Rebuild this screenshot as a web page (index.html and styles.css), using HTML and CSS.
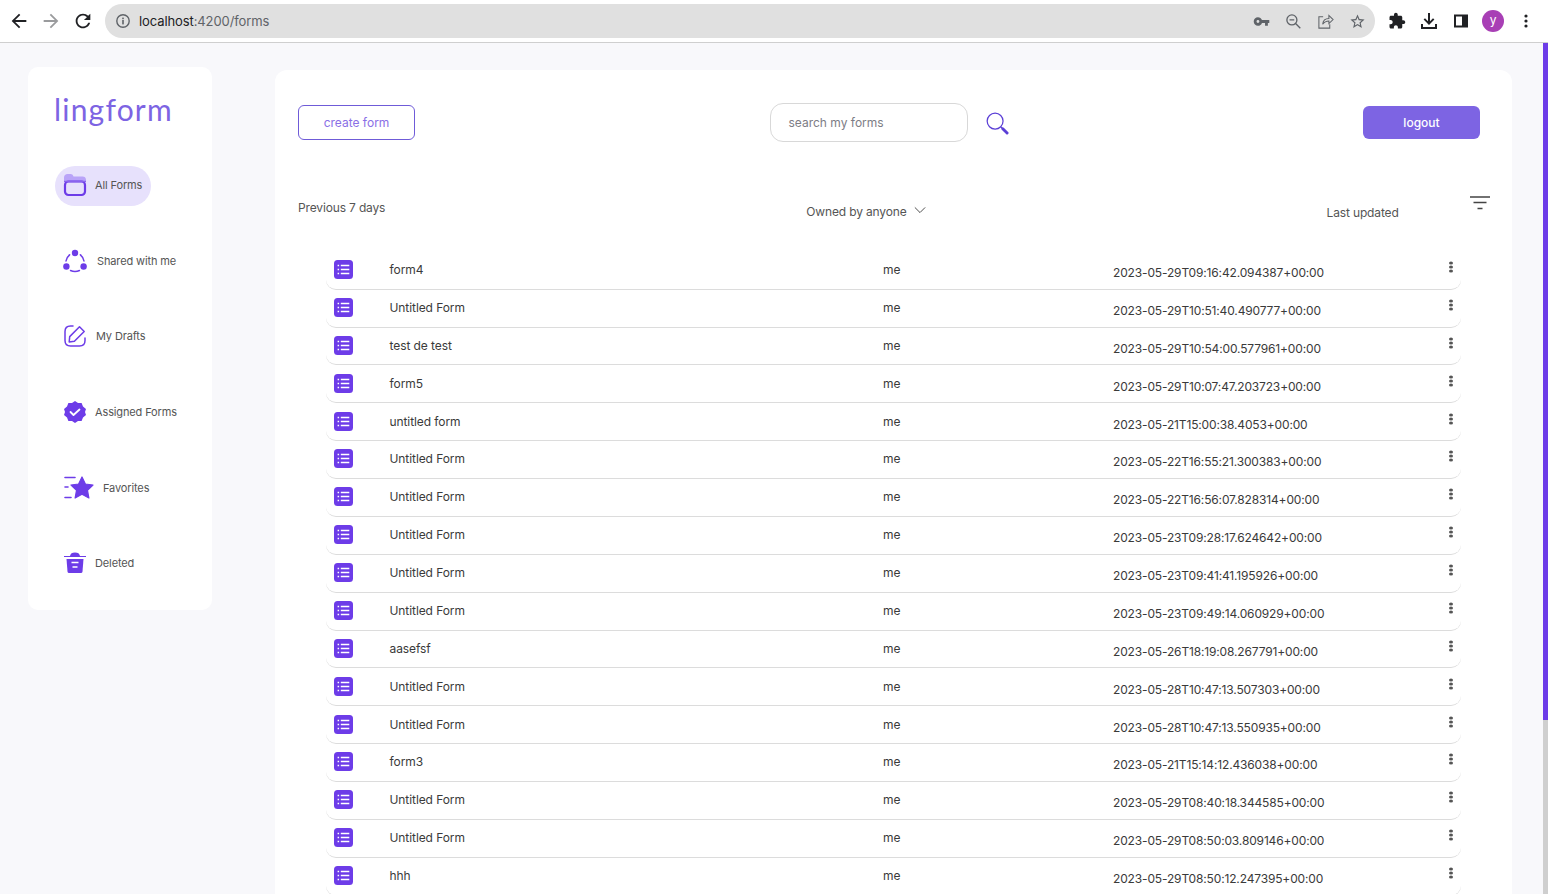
FILE: index.html
```html
<!DOCTYPE html>
<html lang="en">
<head>
<meta charset="utf-8">
<title>lingform</title>
<link rel="stylesheet" href="styles.css">
</head>
<body>
<header class="toolbar">
  <svg class="tb-icon back" viewBox="0 0 24 24"><path d="M20 11H7.83l5.59-5.59L12 4l-8 8 8 8 1.41-1.41L7.83 13H20v-2z"/></svg>
  <svg class="tb-icon forward" viewBox="0 0 24 24"><path d="M4 11h12.17l-5.59-5.59L12 4l8 8-8 8-1.41-1.41L16.17 13H4v-2z"/></svg>
  <svg class="tb-icon reload" viewBox="0 0 24 24"><path d="M17.65 6.35C16.2 4.9 14.21 4 12 4c-4.42 0-7.99 3.58-7.99 8s3.57 8 7.99 8c3.73 0 6.84-2.55 7.73-6h-2.08c-.82 2.33-3.04 4-5.65 4-3.31 0-6-2.69-6-6s2.69-6 6-6c1.66 0 3.14.69 4.22 1.78L13 11h7V4l-2.35 2.35z"/></svg>
  <div class="omnibox">
    <svg class="info" viewBox="0 0 16 16"><circle cx="8" cy="8" r="6.2" fill="none" stroke="#5f6368" stroke-width="1.4"/><rect x="7.2" y="7" width="1.6" height="4.4" fill="#5f6368"/><rect x="7.2" y="4.6" width="1.6" height="1.6" fill="#5f6368"/></svg>
    <span class="url"><span class="host">localhost</span>:4200/forms</span>
    <div class="omni-actions">
      <svg class="omni-icon" viewBox="0 0 24 24"><path d="M12.65 10C11.83 7.67 9.61 6 7 6c-3.31 0-6 2.69-6 6s2.69 6 6 6c2.61 0 4.83-1.67 5.65-4H17v4h4v-4h2v-4H12.65zM7 14c-1.1 0-2-.9-2-2s.9-2 2-2 2 .9 2 2-.9 2-2 2z"/></svg>
      <svg class="omni-icon" viewBox="0 0 18 18"><circle cx="7.3" cy="7.3" r="5.3" fill="none" stroke="#5f6368" stroke-width="1.4"/><path d="M11.2 11.2l5 5M4.8 7.3h5" fill="none" stroke="#5f6368" stroke-width="1.4"/></svg>
      <svg class="omni-icon" viewBox="0 0 18 18"><path d="M6.5 4H2v12h11.5v-4M6 12c.4-4 3-6.2 6.6-6.2V2.600L17 7l-4.400 4.200V8.400C9.800 8.400 7.600 9.600 6 12z" fill="none" stroke="#5f6368" stroke-width="1.1"/></svg>
      <svg class="omni-icon" viewBox="0 0 24 24"><path d="M22 9.24l-7.19-.62L12 2 9.19 8.63 2 9.24l5.46 4.73L5.82 21 12 17.27 18.18 21l-1.63-7.03L22 9.24zM12 15.4l-3.76 2.27 1-4.28-3.32-2.88 4.38-.38L12 6.1l1.71 4.04 4.38.38-3.32 2.88 1 4.28L12 15.4z"/></svg>
    </div>
  </div>
  <svg class="tb-icon ext" viewBox="0 0 24 24"><path d="M20.5 11H19V7c0-1.1-.9-2-2-2h-4V3.5C13 2.12 11.88 1 10.5 1S8 2.12 8 3.5V5H4c-1.1 0-1.99.9-1.99 2v3.8H3.5c1.49 0 2.7 1.21 2.7 2.7s-1.21 2.7-2.7 2.7H2V20c0 1.1.9 2 2 2h3.8v-1.5c0-1.49 1.21-2.7 2.7-2.7 1.49 0 2.7 1.21 2.7 2.7V22H17c1.1 0 2-.9 2-2v-4h1.5c1.38 0 2.5-1.12 2.5-2.5S21.88 11 20.5 11z"/></svg>
  <svg class="tb-icon download" viewBox="0 0 18 18"><path d="M8 1h2v8.2l3-3 1.4 1.4L9 13 3.6 7.6 5 6.2l3 3zM1 12h2v3h12v-3h2v5H1z"/></svg>
  <svg class="tb-icon panel" viewBox="0 0 16 16"><path fill-rule="evenodd" d="M1 1.5h14v13H1zM3 3.500v9h6v-9z"/></svg>
  <span class="avatar">y</span>
  <svg class="tb-icon kebab" viewBox="0 0 16 16"><circle cx="8" cy="3" r="1.6"/><circle cx="8" cy="8" r="1.6"/><circle cx="8" cy="13" r="1.6"/></svg>
</header>

<div class="viewport">
  <div class="page">
    <aside class="sidebar">
      <div class="logo">lingform</div>
      <nav class="nav">
        <a class="nav-item active">
          <svg class="nav-icon" viewBox="0 0 24 24"><path d="M1 9V4.500C1 2.500 2.500 1 4.500 1H7.500c1.500 0 2.200.7 3 2.500h9c2 0 3.500 1 3.500 3.500v2z" fill="#b9a3f8"/><rect x="2" y="8.500" width="20" height="13.500" rx="3.500" fill="#e7e1fc" stroke="#6d3ce8" stroke-width="2.200"/><path d="M1 8.500h22" stroke="#8a63ee" stroke-width="1.400"/></svg>
          <span>All Forms</span>
        </a>
        <a class="nav-item shared">
          <svg class="nav-icon" viewBox="0 0 24 24"><circle cx="12" cy="4" r="3.200" fill="#6d3ce8"/><circle cx="3.400" cy="17.500" r="3.200" fill="#6d3ce8"/><circle cx="20.600" cy="17.500" r="3.200" fill="#6d3ce8"/><path d="M6.600 5.800A10 10 0 0 0 3 12M17.400 5.800A10 10 0 0 1 21 12M7.500 21.500a11 11 0 0 0 9 0" fill="none" stroke="#6d3ce8" stroke-width="1.500" stroke-linecap="round"/></svg>
          <span>Shared with me</span>
        </a>
        <a class="nav-item drafts">
          <svg class="nav-icon" viewBox="0 0 24 24"><path d="M10 2H7.500C3.800 2 2 4 2 7.500v9C2 20 3.800 22 7.500 22h9c3.700 0 5.500-2 5.500-5.500V14" fill="none" stroke="#6d3ce8" stroke-width="1.500" stroke-linecap="round"/><path d="M16.500 2.800l4.700 4.700-9.800 9.800-5.200.6.500-5.300z" fill="none" stroke="#6d3ce8" stroke-width="1.500" stroke-linejoin="round"/></svg>
          <span>My Drafts</span>
        </a>
        <a class="nav-item assigned">
          <svg class="nav-icon" viewBox="0 0 24 24"><path d="M12 1l3 2h3.600L20 6.500l3 2.500-1 3 1 3-3 2.500L18.600 21H15l-3 2-3-2H5.400L4 17.500 1 15l1-3-1-3 3-2.500L5.400 3H9z" fill="#6d3ce8"/><path d="M7.500 12l3 3 6-5.500" fill="none" stroke="#fff" stroke-width="1.800" stroke-linecap="round" stroke-linejoin="round"/></svg>
          <span>Assigned Forms</span>
        </a>
        <a class="nav-item favorites">
          <svg class="fav-icon" viewBox="0 0 30 24"><path d="M18 1l3.400 7 7.600 1-5.500 5.300 1.400 7.700-6.900-3.700L11.100 22l1.400-7.700L7 9l7.600-1z" fill="#6d3ce8" stroke="#6d3ce8" stroke-linejoin="round" stroke-width="1.200"/><path d="M1 1.500h10M1 11h3M1 21.500h6" stroke="#6d3ce8" stroke-width="1.600" stroke-linecap="round"/></svg>
          <span>Favorites</span>
        </a>
        <a class="nav-item deleted">
          <svg class="nav-icon" viewBox="0 0 24 24"><path d="M7 5c.5-2.500 2-3.500 5-3.500s4.500 1 5 3.500h6v1H1V5z" fill="#6d3ce8"/><path d="M3.500 8h17l-1 12.500c-.1 1-1 1.500-2 1.500h-11c-1 0-1.900-.5-2-1.500z" fill="#6d3ce8"/><path d="M8.500 11.500h7M9.500 16h5" stroke="#fff" stroke-width="1.400"/></svg>
          <span>Deleted</span>
        </a>
      </nav>
    </aside>

    <main class="main">
      <div class="topbar">
        <button class="create-btn">create form</button>
        <div class="search">
          <div class="search-box">search my forms</div>
          <svg class="search-icon" viewBox="0 0 24 24"><circle cx="9.500" cy="9.500" r="8.300" fill="none" stroke="#5b3fd6" stroke-width="1.300"/><path d="M15.500 15.500l2 2" stroke="#5b3fd6" stroke-width="1.300"/><path d="M17.500 17.500l4.500 4.500" stroke="#5b3fd6" stroke-width="3" stroke-linecap="round"/></svg>
        </div>
        <button class="logout-btn">logout</button>
      </div>

      <div class="list-head">
        <span class="period">Previous 7 days</span>
        <span class="owner">Owned by anyone
          <svg class="chevron" viewBox="0 0 14 8"><path d="M1 1l6 6 6-6" fill="none" stroke="#444" stroke-width="1.100"/></svg>
        </span>
        <span class="updated">Last updated</span>
        <svg class="filter" viewBox="0 0 20 14"><path d="M0 1h20M3.500 6.500h13M7.500 12.500h5" stroke="#444" stroke-width="1.500"/></svg>
      </div>

      <div class="rows">
        <div class="row"><svg class="doc" viewBox="0 0 19 19"><use href="#doc-icon"/></svg><span class="name">form4</span><span class="who">me</span><span class="date">2023-05-29T09:16:42.094387+00:00</span><span class="dots"><i></i><i></i><i></i></span></div>
        <div class="row"><svg class="doc" viewBox="0 0 19 19"><use href="#doc-icon"/></svg><span class="name">Untitled Form</span><span class="who">me</span><span class="date">2023-05-29T10:51:40.490777+00:00</span><span class="dots"><i></i><i></i><i></i></span></div>
        <div class="row"><svg class="doc" viewBox="0 0 19 19"><use href="#doc-icon"/></svg><span class="name">test de test</span><span class="who">me</span><span class="date">2023-05-29T10:54:00.577961+00:00</span><span class="dots"><i></i><i></i><i></i></span></div>
        <div class="row"><svg class="doc" viewBox="0 0 19 19"><use href="#doc-icon"/></svg><span class="name">form5</span><span class="who">me</span><span class="date">2023-05-29T10:07:47.203723+00:00</span><span class="dots"><i></i><i></i><i></i></span></div>
        <div class="row"><svg class="doc" viewBox="0 0 19 19"><use href="#doc-icon"/></svg><span class="name">untitled form</span><span class="who">me</span><span class="date">2023-05-21T15:00:38.4053+00:00</span><span class="dots"><i></i><i></i><i></i></span></div>
        <div class="row"><svg class="doc" viewBox="0 0 19 19"><use href="#doc-icon"/></svg><span class="name">Untitled Form</span><span class="who">me</span><span class="date">2023-05-22T16:55:21.300383+00:00</span><span class="dots"><i></i><i></i><i></i></span></div>
        <div class="row"><svg class="doc" viewBox="0 0 19 19"><use href="#doc-icon"/></svg><span class="name">Untitled Form</span><span class="who">me</span><span class="date">2023-05-22T16:56:07.828314+00:00</span><span class="dots"><i></i><i></i><i></i></span></div>
        <div class="row"><svg class="doc" viewBox="0 0 19 19"><use href="#doc-icon"/></svg><span class="name">Untitled Form</span><span class="who">me</span><span class="date">2023-05-23T09:28:17.624642+00:00</span><span class="dots"><i></i><i></i><i></i></span></div>
        <div class="row"><svg class="doc" viewBox="0 0 19 19"><use href="#doc-icon"/></svg><span class="name">Untitled Form</span><span class="who">me</span><span class="date">2023-05-23T09:41:41.195926+00:00</span><span class="dots"><i></i><i></i><i></i></span></div>
        <div class="row"><svg class="doc" viewBox="0 0 19 19"><use href="#doc-icon"/></svg><span class="name">Untitled Form</span><span class="who">me</span><span class="date">2023-05-23T09:49:14.060929+00:00</span><span class="dots"><i></i><i></i><i></i></span></div>
        <div class="row"><svg class="doc" viewBox="0 0 19 19"><use href="#doc-icon"/></svg><span class="name">aasefsf</span><span class="who">me</span><span class="date">2023-05-26T18:19:08.267791+00:00</span><span class="dots"><i></i><i></i><i></i></span></div>
        <div class="row"><svg class="doc" viewBox="0 0 19 19"><use href="#doc-icon"/></svg><span class="name">Untitled Form</span><span class="who">me</span><span class="date">2023-05-28T10:47:13.507303+00:00</span><span class="dots"><i></i><i></i><i></i></span></div>
        <div class="row"><svg class="doc" viewBox="0 0 19 19"><use href="#doc-icon"/></svg><span class="name">Untitled Form</span><span class="who">me</span><span class="date">2023-05-28T10:47:13.550935+00:00</span><span class="dots"><i></i><i></i><i></i></span></div>
        <div class="row"><svg class="doc" viewBox="0 0 19 19"><use href="#doc-icon"/></svg><span class="name">form3</span><span class="who">me</span><span class="date">2023-05-21T15:14:12.436038+00:00</span><span class="dots"><i></i><i></i><i></i></span></div>
        <div class="row"><svg class="doc" viewBox="0 0 19 19"><use href="#doc-icon"/></svg><span class="name">Untitled Form</span><span class="who">me</span><span class="date">2023-05-29T08:40:18.344585+00:00</span><span class="dots"><i></i><i></i><i></i></span></div>
        <div class="row"><svg class="doc" viewBox="0 0 19 19"><use href="#doc-icon"/></svg><span class="name">Untitled Form</span><span class="who">me</span><span class="date">2023-05-29T08:50:03.809146+00:00</span><span class="dots"><i></i><i></i><i></i></span></div>
        <div class="row"><svg class="doc" viewBox="0 0 19 19"><use href="#doc-icon"/></svg><span class="name">hhh</span><span class="who">me</span><span class="date">2023-05-29T08:50:12.247395+00:00</span><span class="dots"><i></i><i></i><i></i></span></div>
      </div>
    </main>
  </div>
  <div class="scrollbar"><div class="thumb"></div></div>
</div>

<svg class="defs" width="0" height="0">
  <symbol id="doc-icon" viewBox="0 0 19 19">
    <rect width="19" height="19" rx="3.500" fill="#6d3ce8"/>
    <path d="M6.800 5.500h8.500M6.800 9.500h8.500M6.800 13.500h8.500" stroke="#fff" stroke-width="1.400"/>
    <path d="M3.600 5.500h1.500M3.600 9.500h1.500M3.600 13.500h1.500" stroke="#fff" stroke-width="1.400"/>
  </symbol>
</svg>
</body>
</html>
```
FILE: styles.css
```css
* { box-sizing: border-box; }
html, body { margin: 0; height: 100%; overflow: hidden; }
body { font-family: Inter, "Liberation Sans", sans-serif; background: #f8f8fb; color: #333; font-size: 12px; display: flex; flex-direction: column; }

/* browser toolbar */
.toolbar { height: 43px; flex: none; background: #fff; border-bottom: 1px solid #cfcfcf; display: flex; align-items: center; padding: 0 0 0 8px; position: relative; }
.tb-icon { width: 22px; height: 22px; flex: none; fill: #202124; }
.back { margin-right: 10px; }
.forward { fill: #9a9b9d; margin-right: 10px; }
.reload { margin-right: 11px; }
.omnibox { width: 1270px; height: 34px; background: #e0e0e0; border-radius: 17px; display: flex; align-items: center; padding: 0 9.5px 0 10px; flex: none; }
.info { width: 16px; height: 16px; flex: none; margin-right: 8px; }
.url { font-size: 13px; letter-spacing: -0.1px; color: #5f6368; }
.host { color: #202124; }
.omni-actions { margin-left: auto; display: flex; align-items: center; gap: 15px; }
.omni-icon { width: 17px; height: 17px; fill: #5f6368; }
.ext { width: 18px; height: 18px; margin-left: 13px; }
.download { width: 18px; height: 18px; margin-left: 14px; }
.panel { width: 16px; height: 16px; margin-left: 15px; }
.avatar { width: 22px; height: 22px; margin-left: 13px; border-radius: 50%; background: #a83fb5; color: #fff; font-size: 12px; display: flex; align-items: center; justify-content: center; padding-bottom: 3px; flex: none; }
.kebab { width: 16px; height: 16px; margin-left: 14px; }

/* page frame */
.viewport { flex: 1; min-height: 0; display: flex; }
.page { flex: 1; min-width: 0; display: flex; align-items: flex-start; padding: 24px 31px 0 28px; overflow: hidden; }
.scrollbar { width: 5px; flex: none; background: #cfcfcf; }
.thumb { height: 677px; background: #6d3ce8; }

/* sidebar */
.sidebar { width: 184px; height: 543px; flex: none; background: #fff; border-radius: 10px; padding: 26px 0 0 27px; }
.logo { font-family: Lato, sans-serif; font-weight: 400; font-size: 30px; line-height: 32px; height: 32px; color: #7d64e3; letter-spacing: 1.2px; margin-left: -1px; }
.nav { margin-top: 41px; display: flex; flex-direction: column; }
.nav-item { display: flex; align-items: center; height: 40px; font-size: 11px; letter-spacing: -0.13px; color: #555; margin-bottom: 35.6px; padding: 0 0 2px 8px; }
.nav-icon { width: 24px; height: 24px; flex: none; margin-right: 8px; }
.fav-icon { width: 30px; height: 24px; flex: none; margin: 0 9px 0 1px; }
.active { width: 96px; background: #e7e1fc; border-radius: 20px; }
.shared .nav-icon { margin-right: 10px; }
.drafts .nav-icon { margin-right: 9px; }
.favorites { padding-bottom: 0; }

/* main panel */
.main { flex: 1; min-width: 0; height: 900px; margin: 3px 0 0 63px; background: #fff; border-radius: 12px 12px 0 0; padding: 32px 0 0 23px; }
.topbar { display: flex; align-items: center; height: 40px; }
.create-btn { width: 117px; height: 35px; background: #fff; border: 1px solid #6f5bd8; border-radius: 6px; color: #8a6fe6; font: 12px Inter, sans-serif; padding: 0; flex: none; }
.search { display: flex; align-items: center; margin-left: 355px; flex: none; }
.search-box { width: 198px; height: 39px; border: 1px solid #d8d8d8; border-radius: 13px; padding-left: 17.5px; line-height: 37px; font-size: 12px; color: #7d7d85; }
.search-icon { width: 23px; height: 23px; margin: 2px 0 0 18px; flex: none; }
.logout-btn { width: 117px; height: 33px; margin-left: 354px; background: #7d64e3; border: 0; border-radius: 6px; color: #fff; font: 500 12px Inter, sans-serif; padding: 0; flex: none; }

.list-head { height: 109.8px; font-size: 12px; letter-spacing: -0.15px; color: #555; display: flex; }
.period { margin-top: 58px; line-height: 15px; }
.owner { margin: 62px 0 0 421px; line-height: 15px; display: flex; align-items: center; height: 15px; white-space: nowrap; }
.chevron { width: 12px; height: 8px; margin: -3px 0 0 7px; }
.updated { margin: 63px 0 0 401px; line-height: 15px; }
.filter { width: 20px; height: 14px; margin: 54px 0 0 71px; flex: none; }

.rows { margin-left: 28px; width: 1135px; display: flex; flex-direction: column; }
.row { height: 37.875px; display: grid; grid-template-columns: 55.5px 493.5px 230px 1fr 12px; align-items: center; padding: 0 0 1.25px 8px; border-bottom: 1px solid #dcdcdc; border-radius: 0 0 10px 10px; font-size: 12px; color: #3a3a3a; flex: none; }
.doc { width: 19px; height: 19px; }
.name { letter-spacing: -0.08px; }
.date { transform: translateY(2.5px); letter-spacing: -0.15px; }
.dots { display: flex; flex-direction: column; gap: 1px; width: 4px; transform: translateY(-2.5px); }
.dots i { width: 4px; height: 3px; border-radius: 50%; background: #555; display: block; }
.defs { position: absolute; }
```
